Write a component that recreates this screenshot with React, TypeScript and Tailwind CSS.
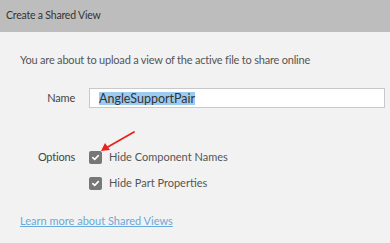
import React from "react";

function Check() {
  return (
    <span className="flex h-[13px] w-[13px] items-center justify-center rounded-[2px] bg-[#777777]">
      <svg width="9" height="9" viewBox="0 0 9 9">
        <path d="M1.8 4.6 L3.7 6.4 L7.3 2.6" fill="none" stroke="#ffffff" strokeWidth="1.6" strokeLinecap="round" strokeLinejoin="round" />
      </svg>
    </span>
  );
}

export default function App() {
  return (
    <div className="relative h-[243px] w-[390px] overflow-hidden bg-[#f2f2f2] text-[11px] tracking-[-0.2px] text-[#555555]" style={{ fontFamily: 'Lato, "Open Sans", sans-serif' }}>
      <div className="flex h-[32px] items-center bg-[#bdbdbd] pl-[6px] text-[10.5px] text-[#333333]">
        Create a Shared View
      </div>
      <div className="flex flex-col pl-[20px]">
        <div className="mt-[19px] leading-[18px]">You are about to upload a view of the active file to share online</div>
        <div className="mt-[19px] flex items-center">
          <div className="w-[55px] text-right text-[#444444]">Name</div>
          <div className="ml-[14px] flex h-[20px] w-[296px] items-center border border-[#c9c9c9] bg-white pl-[9px] text-[12.5px] tracking-normal text-[#333333]">
            <span className="bg-[#9dcbf0] leading-[13px]">AngleSupportPair</span>
          </div>
        </div>
        <div className="mt-[40px] flex">
          <div className="w-[55px] pt-[0px] text-right leading-[18px] text-[#444444]">Options</div>
          <div className="ml-[14px] flex flex-col gap-[8px] tracking-normal">
            <div className="flex h-[18px] items-center gap-[7px]">
              <Check />
              <span>Hide Component Names</span>
            </div>
            <div className="flex h-[18px] items-center gap-[7px]">
              <Check />
              <span>Hide Part Properties</span>
            </div>
          </div>
        </div>
        <a className="mt-[20px] w-fit leading-[18px] tracking-normal text-[#6aa9d9] underline" href="#">Learn more about Shared Views</a>
      </div>
      <svg className="absolute left-0 top-0" width="390" height="243" viewBox="0 0 390 243">
        <line x1="134" y1="132" x2="106" y2="148" stroke="#e8231f" strokeWidth="1.8" strokeLinecap="round" />
        <polygon points="101,151 105,143 110,150" fill="#e8231f" />
      </svg>
    </div>
  );
}
